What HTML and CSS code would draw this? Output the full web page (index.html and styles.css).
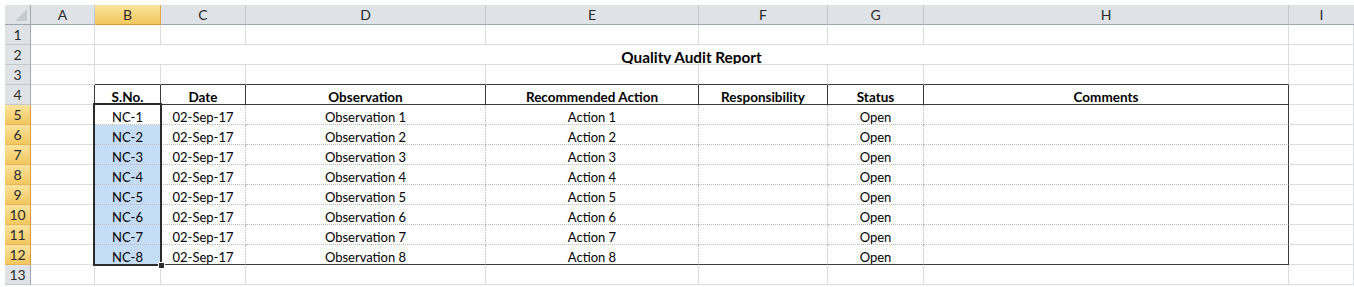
FILE: index.html
```html
<!DOCTYPE html>
<html>
<head>
<meta charset="utf-8">
<link rel="stylesheet" href="styles.css">
</head>
<body>
<div class="sheet">
  <div class="grid">
    <div class="corner"><span class="tri"></span></div>
    <div class="ch">A</div><div class="ch hl">B</div><div class="ch">C</div><div class="ch">D</div><div class="ch">E</div><div class="ch">F</div><div class="ch">G</div><div class="ch">H</div><div class="ch last">I</div>

    <div class="rh">1</div>
    <div class="c"></div><div class="c"></div><div class="c"></div><div class="c"></div><div class="c"></div><div class="c"></div><div class="c"></div><div class="c"></div><div class="c"></div>

    <div class="rh">2</div>
    <div class="c"></div><div class="c title">Quality Audit Report</div><div class="c"></div>

    <div class="rh">3</div>
    <div class="c"></div><div class="c top"></div><div class="c top"></div><div class="c top"></div><div class="c top"></div><div class="c top"></div><div class="c top"></div><div class="c top"></div><div class="c"></div>

    <div class="rh">4</div>
    <div class="c lft"></div><div class="c th">S.No.</div><div class="c th">Date</div><div class="c th">Observation</div><div class="c th">Recommended Action</div><div class="c th">Responsibility</div><div class="c th">Status</div><div class="c th">Comments</div><div class="c"></div>

    <div class="rh hl">5</div>
    <div class="c lft"></div><div class="c td act">NC-1</div><div class="c td">02-Sep-17</div><div class="c td">Observation 1</div><div class="c td">Action 1</div><div class="c td"></div><div class="c td">Open</div><div class="c td end"></div><div class="c"></div>

    <div class="rh hl">6</div>
    <div class="c lft"></div><div class="c td sel">NC-2</div><div class="c td">02-Sep-17</div><div class="c td">Observation 2</div><div class="c td">Action 2</div><div class="c td"></div><div class="c td">Open</div><div class="c td end"></div><div class="c"></div>

    <div class="rh hl">7</div>
    <div class="c lft"></div><div class="c td sel">NC-3</div><div class="c td">02-Sep-17</div><div class="c td">Observation 3</div><div class="c td">Action 3</div><div class="c td"></div><div class="c td">Open</div><div class="c td end"></div><div class="c"></div>

    <div class="rh hl">8</div>
    <div class="c lft"></div><div class="c td sel">NC-4</div><div class="c td">02-Sep-17</div><div class="c td">Observation 4</div><div class="c td">Action 4</div><div class="c td"></div><div class="c td">Open</div><div class="c td end"></div><div class="c"></div>

    <div class="rh hl">9</div>
    <div class="c lft"></div><div class="c td sel">NC-5</div><div class="c td">02-Sep-17</div><div class="c td">Observation 5</div><div class="c td">Action 5</div><div class="c td"></div><div class="c td">Open</div><div class="c td end"></div><div class="c"></div>

    <div class="rh hl">10</div>
    <div class="c lft"></div><div class="c td sel">NC-6</div><div class="c td">02-Sep-17</div><div class="c td">Observation 6</div><div class="c td">Action 6</div><div class="c td"></div><div class="c td">Open</div><div class="c td end"></div><div class="c"></div>

    <div class="rh hl">11</div>
    <div class="c lft"></div><div class="c td sel">NC-7</div><div class="c td">02-Sep-17</div><div class="c td">Observation 7</div><div class="c td">Action 7</div><div class="c td"></div><div class="c td">Open</div><div class="c td end"></div><div class="c"></div>

    <div class="rh hl">12</div>
    <div class="c lft"></div><div class="c td sel bot">NC-8</div><div class="c td bot">02-Sep-17</div><div class="c td bot">Observation 8</div><div class="c td bot">Action 8</div><div class="c td bot"></div><div class="c td bot">Open</div><div class="c td end bot"></div><div class="c"></div>

    <div class="rh">13</div>
    <div class="c"></div><div class="c"></div><div class="c"></div><div class="c"></div><div class="c"></div><div class="c"></div><div class="c"></div><div class="c"></div><div class="c"></div>
  </div>
  <div class="selection"><span class="handle"></span></div>
</div>
</body>
</html>
```

FILE: styles.css
```css
html, body {
  margin: 0;
  padding: 0;
  background: #ffffff;
}

.sheet {
  position: relative;
  margin: 5px 0 0 5px;
  font-family: Lato, "Liberation Sans", sans-serif;
  font-size: 13px;
  color: #000;
}

.grid {
  display: grid;
  grid-template-columns: 26px 64px 66px 85px 240px 213px 129px 96px 365px 65px;
  grid-auto-rows: 20px;
}

.grid > div {
  box-sizing: border-box;
  display: flex;
  align-items: center;
  justify-content: center;
  white-space: nowrap;
  overflow: hidden;
}

.corner {
  position: relative;
  background: #dfe3e8;
  border-right: 1px solid #9ea6b0;
  border-bottom: 1px solid #9ea6b0;
}

.tri {
  position: absolute;
  right: 3px;
  bottom: 3px;
  width: 0;
  height: 0;
  border-left: 12px solid transparent;
  border-bottom: 12px solid #c6cbd1;
}

.ch {
  background: #dfe3e8;
  border-right: 1px solid #c3c8ce;
  border-bottom: 1px solid #9ea6b0;
  color: #2a2a2a;
  font-size: 14px;
}

.ch.last {
  border-right: none;
}

.rh {
  background: #dfe3e8;
  border-right: 1px solid #9ea6b0;
  border-bottom: 1px solid #c3c8ce;
  color: #2a2a2a;
  font-size: 14px;
}

.ch.hl {
  background: linear-gradient(#fbe49c, #f3c660);
  border-right: 1px solid #e2a84c;
  border-bottom: 1px solid #d99a3b;
}

.rh.hl {
  background: linear-gradient(#fbe49c, #f3c660);
  border-right: 1px solid #d99a3b;
  border-bottom: 1px solid #e6b458;
}

.c {
  padding-top: 4px;
  border-right: 1px solid #dadcdd;
  border-bottom: 1px solid #dadcdd;
}

.title {
  grid-column: span 7;
  font-weight: bold;
  font-size: 15.3px;
}

.top {
  border-bottom: 1px solid #3a3a3a;
}

.lft {
  border-right: 1px solid #3a3a3a;
}

.th {
  font-weight: bold;
  font-size: 13.5px;
  border-right: 1px solid #3a3a3a;
  border-bottom: 1px solid #3a3a3a;
}

.td {
  border-right: 1px dotted #bcbcbc;
  border-bottom: 1px dotted #bcbcbc;
}

.td.end {
  border-right: 1px solid #3a3a3a;
}

.td.bot {
  border-bottom: 1px solid #3a3a3a;
}

.td.sel {
  background: #c5dcf6;
}

.td.act {
  background: #ffffff;
}

.selection {
  position: absolute;
  left: 88px;
  top: 98px;
  width: 69px;
  height: 163px;
  box-sizing: border-box;
  border: 2px solid #2b2b2b;
  pointer-events: none;
}

.handle {
  position: absolute;
  right: -5px;
  bottom: -5px;
  width: 5px;
  height: 5px;
  background: #2b2b2b;
  border: 1px solid #ffffff;
}
```
